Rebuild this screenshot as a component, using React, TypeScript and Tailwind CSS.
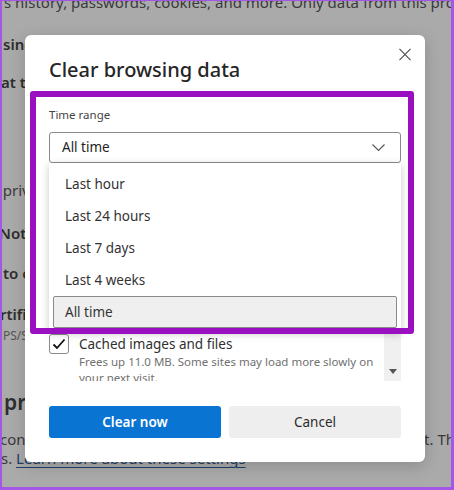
import React from 'react';

const ranges = ['Last hour', 'Last 24 hours', 'Last 7 days', 'Last 4 weeks', 'All time'];

function BackgroundPage() {
  return (
    <div className="flex flex-col text-[#2e2e2e]">
      <div className="-mt-[9px] h-[20px] whitespace-nowrap pl-[2px] text-[15px] leading-[20px] text-[#3a3a3a]">
        s history, passwords, cookies, and more. Only data from this profile will be deleted.
      </div>
      <div className="mt-[22px] h-[20px] whitespace-nowrap pl-[1px] text-[15px] font-semibold leading-[20px]">sing data now</div>
      <div className="mt-[18px] h-[20px] whitespace-nowrap -ml-[1px] text-[15px] font-semibold leading-[20px]">at to clear every time</div>
      <div className="mt-[88px] h-[20px] whitespace-nowrap -ml-[7px] text-[15px] leading-[20px] text-[#3a3a3a]">i privacy</div>
      <div className="mt-[23px] h-[20px] whitespace-nowrap -ml-[3px] text-[15px] font-semibold leading-[20px]">Not Track</div>
      <div className="mt-[20px] h-[20px] whitespace-nowrap pl-[1px] text-[15px] font-semibold leading-[20px]">to check</div>
      <div className="mt-[21px] h-[20px] whitespace-nowrap -ml-[2px] text-[15px] font-semibold leading-[20px]">rtificates</div>
      <div className="mt-[4px] h-[16px] whitespace-nowrap pl-[1px] text-[12px] leading-[16px] text-[#555]">PS/SSL</div>
      <div className="mt-[44px] h-[28px] whitespace-nowrap pl-[2px] text-[21px] font-semibold leading-[28px]">prove</div>
      <div className="mt-[13px] flex h-[20px] justify-between whitespace-nowrap text-[15px] leading-[20px] text-[#3a3a3a]">
        <span className="-ml-[2px]">contains</span>
        <span className="-mr-[4px]">oft. Th</span>
      </div>
      <div className="-mt-[1px] h-[20px] whitespace-nowrap -ml-[1px] text-[15px] leading-[20px] text-[#3a3a3a]">
        s. <span className="text-[#1d3f66] underline underline-offset-[3px]">Learn more about these settings</span>
      </div>
    </div>
  );
}

function ClearDialog() {
  return (
    <div className="absolute left-[23px] top-[34px] flex h-[427px] w-[400px] flex-col rounded-[6px] bg-white px-6 pb-6 pt-[21px] shadow-[0_4px_16px_rgba(0,0,0,0.18)]">
      <button className="absolute right-[14px] top-[13px] flex h-3 w-3 items-center justify-center">
        <svg width="13" height="13" viewBox="0 0 13 13" fill="none" stroke="#444" strokeWidth="1.1">
          <path d="M0.5 0.5 L12.5 12.5 M12.5 0.5 L0.5 12.5" />
        </svg>
      </button>

      <h2 className="h-[28px] text-[20px] font-medium leading-[28px] text-[#262626]">Clear browsing data</h2>

      <label className="mt-[23px] h-[16px] text-[11.5px] leading-[16px] text-[#444]">Time range</label>

      <div className="relative mt-[9px]">
        <div className="flex h-[31px] items-center justify-between rounded-[3px] border border-[#8a8a8a] pl-3 pr-[15px] text-[13.5px] text-[#222]">
          <span>All time</span>
          <svg width="13" height="7" viewBox="0 0 13 7" fill="none" stroke="#555" strokeWidth="1.1">
            <path d="M0.5 0.5 L6.5 6.5 L12.5 0.5" />
          </svg>
        </div>

        <ul className="absolute left-0 top-[31px] z-10 w-[352px] bg-white px-[4px] pb-[4px] pt-[5px] shadow-[0_2px_8px_rgba(0,0,0,0.22)]">
          {ranges.map((r) => (
            <li
              key={r}
              className={
                r === 'All time'
                  ? 'flex h-[32px] items-center rounded-[2px] border border-[#8a8a8a] bg-[#efefef] pl-[11px] text-[13.5px] text-[#333]'
                  : 'flex h-[32px] items-center pl-[12px] text-[13.5px] text-[#333]'
              }
            >
              {r}
            </li>
          ))}
        </ul>
      </div>

      <div className="mt-[12px] flex h-[206px]">
        <div className="flex flex-1 flex-col justify-end overflow-hidden">
          <div className="-mb-[5px] flex gap-[10px]">
            <div className="flex h-[20px] w-[20px] shrink-0 items-center justify-center rounded-[3px] border border-[#8a8a8a] bg-white">
              <svg width="14" height="12" viewBox="0 0 14 12" fill="none" stroke="#111" strokeWidth="1.8">
                <path d="M1.5 6.5 L5 10 L12.5 1.5" />
              </svg>
            </div>
            <div className="flex flex-col pr-[4px]">
              <span className="text-[13.5px] leading-[20px] text-[#2f2f2f]">Cached images and files</span>
              <span className="text-[11.5px] leading-[16px] text-[#707070]">
                Frees up 11.0 MB. Some sites may load more slowly on your next visit.
              </span>
            </div>
          </div>
        </div>
        <div className="flex w-[17px] flex-col items-center justify-end bg-[#f0f0f0] pb-[7px]">
          <svg width="8" height="5" viewBox="0 0 8 5" fill="#555">
            <path d="M0 0 L8 0 L4 5 Z" />
          </svg>
        </div>
      </div>

      <div className="mt-[25px] grid grid-cols-2 gap-2">
        <button className="h-[32px] rounded-[3px] bg-[#0a74d2] text-[13.5px] font-semibold text-white">Clear now</button>
        <button className="h-[32px] rounded-[3px] bg-[#eeeeee] text-[13.5px] text-[#2b2b2b]">Cancel</button>
      </div>

      <div className="pointer-events-none absolute left-[5px] top-[56px] z-20 h-[243px] w-[384px] rounded-[3px] border-[6px] border-[#9a0fc0]" />
    </div>
  );
}

export default function App() {
  return (
    <div className="relative h-[490px] w-[454px] overflow-hidden border-b-[3px] border-l-2 border-r-[3px] border-t border-[#a457e6] bg-[#aaaaaa] font-['Noto_Sans',sans-serif]">
      <BackgroundPage />
      <ClearDialog />
    </div>
  );
}
